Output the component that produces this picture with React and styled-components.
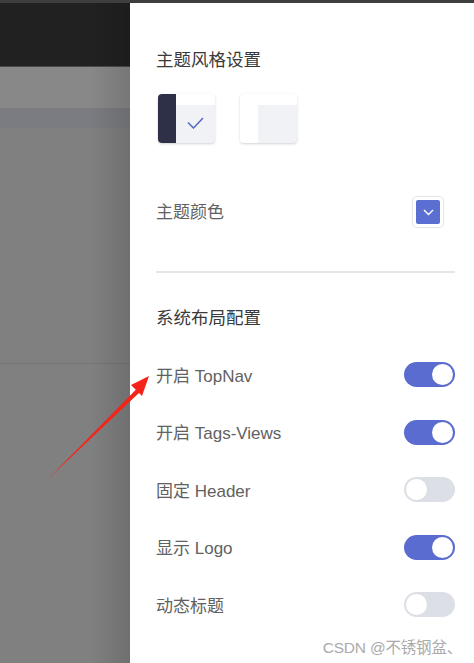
import React from "react";
import styled, { createGlobalStyle } from "styled-components";

const Global = createGlobalStyle`
  html, body { margin: 0; padding: 0; }
  body {
    width: 474px; height: 663px; overflow: hidden; background: #808080;
    font-family: "Liberation Sans", "Noto Sans CJK SC", sans-serif;
  }
`;

const Screen = styled.div`
  position: relative;
  width: 474px;
  height: 663px;
  display: flex;
  flex-direction: column;
  overflow: hidden;
`;

const TopStrip = styled.div`
  height: 3px;
  background: #3e3e3e;
  flex: none;
`;

const Body = styled.div`
  flex: 1;
  display: flex;
`;

const Backdrop = styled.div`
  position: relative;
  width: 130px;
  display: flex;
  flex-direction: column;
  &::after {
    content: "";
    position: absolute;
    top: 0; bottom: 0; right: 0;
    width: 40px;
    background: linear-gradient(to right, rgba(0,0,0,0), rgba(0,0,0,0.13));
  }
`;

const Band = styled.div`
  height: ${(p) => p.$h}px;
  flex: ${(p) => (p.$grow ? 1 : "none")};
  background: ${(p) => p.$bg};
  border-bottom: ${(p) => (p.$line ? `1px solid ${p.$line}` : "none")};
`;

const Panel = styled.div`
  flex: 1;
  background: #ffffff;
  padding: 45px 19px 0 26px;
  display: flex;
  flex-direction: column;
`;

const Title = styled.div`
  font-size: 17.5px;
  line-height: 24px;
  color: #3a3a3a;
  margin-top: ${(p) => p.$mt || 0}px;
`;

const Cards = styled.div`
  display: flex;
  gap: 25px;
  margin-top: 22px;
  padding-left: 2px;
`;

const StyleCard = styled.div`
  position: relative;
  width: 57px;
  height: 49px;
  border-radius: 4px;
  overflow: hidden;
  background: #f0f2f5;
  box-shadow: 0 1px 2.5px rgba(0, 0, 0, 0.18);
  display: grid;
  grid-template-columns: 18px 1fr;
  grid-template-rows: 11px 1fr;
`;

const Side = styled.div`
  grid-row: 1 / 3;
  background: ${(p) => p.$bg};
`;

const TopBar = styled.div`
  background: #ffffff;
`;

const CardCenter = styled.div`
  display: flex;
  align-items: center;
  justify-content: center;
  padding-bottom: 2px;
`;

const Row = styled.div`
  display: flex;
  align-items: center;
  justify-content: space-between;
  height: ${(p) => p.$h || 25}px;
  margin-top: ${(p) => p.$mt}px;
`;

const Label = styled.span`
  font-size: 17px;
  color: #616161;
  line-height: 24px;
  padding-top: ${(p) => p.$pt ?? 4}px;
`;

const Picker = styled.div`
  width: 32px;
  height: 32px;
  box-sizing: border-box;
  border: 1px solid #e6e6e6;
  border-radius: 4px;
  padding: 3px;
  margin-right: 11px;
`;

const Swatch = styled.div`
  width: 100%;
  height: 100%;
  background: #5b6fd2;
  border-radius: 2px;
  display: flex;
  align-items: center;
  justify-content: center;
`;

const Divider = styled.div`
  height: 2px;
  background: #e3e5ea;
  margin-top: 43px;
`;

const Toggle = styled.div`
  width: 51px;
  height: 25px;
  border-radius: 13px;
  background: ${(p) => (p.$on ? "#5a6ccf" : "#dcdfe6")};
  display: flex;
  align-items: center;
  justify-content: ${(p) => (p.$on ? "flex-end" : "flex-start")};
  padding: 0 2px;
  box-sizing: border-box;
`;

const Knob = styled.div`
  width: 21px;
  height: 21px;
  border-radius: 50%;
  background: #ffffff;
`;

const Watermark = styled.div`
  position: absolute;
  right: 12px;
  bottom: 6px;
  font-size: 15.5px;
  color: #aaaaaa;
  text-shadow: 0 0 2px #ffffff;
  letter-spacing: -0.2px;
`;

const ArrowSvg = styled.svg`
  position: absolute;
  left: 0;
  top: 0;
  pointer-events: none;
`;

const rows = [
  { label: "开启 TopNav", on: true },
  { label: "开启 Tags-Views", on: true },
  { label: "固定 Header", on: false },
  { label: "显示 Logo", on: true },
  { label: "动态标题", on: false },
];

export default function App() {
  return (
    <>
      <Global />
      <Screen>
        <TopStrip />
        <Body>
          <Backdrop>
            <Band $h={63} $bg="#212121" $line="#4a4a4a" />
            <Band $h={41} $bg="#888888" $line="#7a7a7a" />
            <Band $h={19} $bg="#7b7c81" />
            <Band $h={235} $bg="#808080" $line="#747474" />
            <Band $grow $bg="#808080" />
          </Backdrop>
          <Panel>
            <Title>主题风格设置</Title>
            <Cards>
              <StyleCard>
                <Side $bg="#2e3048" />
                <TopBar />
                <CardCenter>
                  <svg width="17" height="12" viewBox="0 0 17 12">
                    <path d="M1 5.5 L6.5 11 L16 1" fill="none" stroke="#5668c4" strokeWidth="1.5" />
                  </svg>
                </CardCenter>
              </StyleCard>
              <StyleCard>
                <Side $bg="#ffffff" />
                <TopBar />
                <CardCenter />
              </StyleCard>
            </Cards>
            <Row $h={32} $mt={53}>
              <Label $pt={2}>主题颜色</Label>
              <Picker>
                <Swatch>
                  <svg width="11" height="7" viewBox="0 0 11 7">
                    <path d="M1 1 L5.5 5.5 L10 1" fill="none" stroke="#ffffff" strokeWidth="1.4" />
                  </svg>
                </Swatch>
              </Picker>
            </Row>
            <Divider />
            <Title $mt={33}>系统布局配置</Title>
            {rows.map((r, i) => (
              <Row key={r.label} $mt={i === 0 ? 32 : 32.5}>
                <Label>{r.label}</Label>
                <Toggle $on={r.on}>
                  <Knob />
                </Toggle>
              </Row>
            ))}
          </Panel>
        </Body>
        <Watermark>CSDN @不锈钢盆、</Watermark>
        <ArrowSvg width="474" height="663" viewBox="0 0 474 663">
          <path d="M48 479 L137.5 388 L140.5 391.5 Z" fill="#f5241a" />
          <path d="M149 376 L131 385 L142 396 Z" fill="#f5241a" />
        </ArrowSvg>
      </Screen>
    </>
  );
}
